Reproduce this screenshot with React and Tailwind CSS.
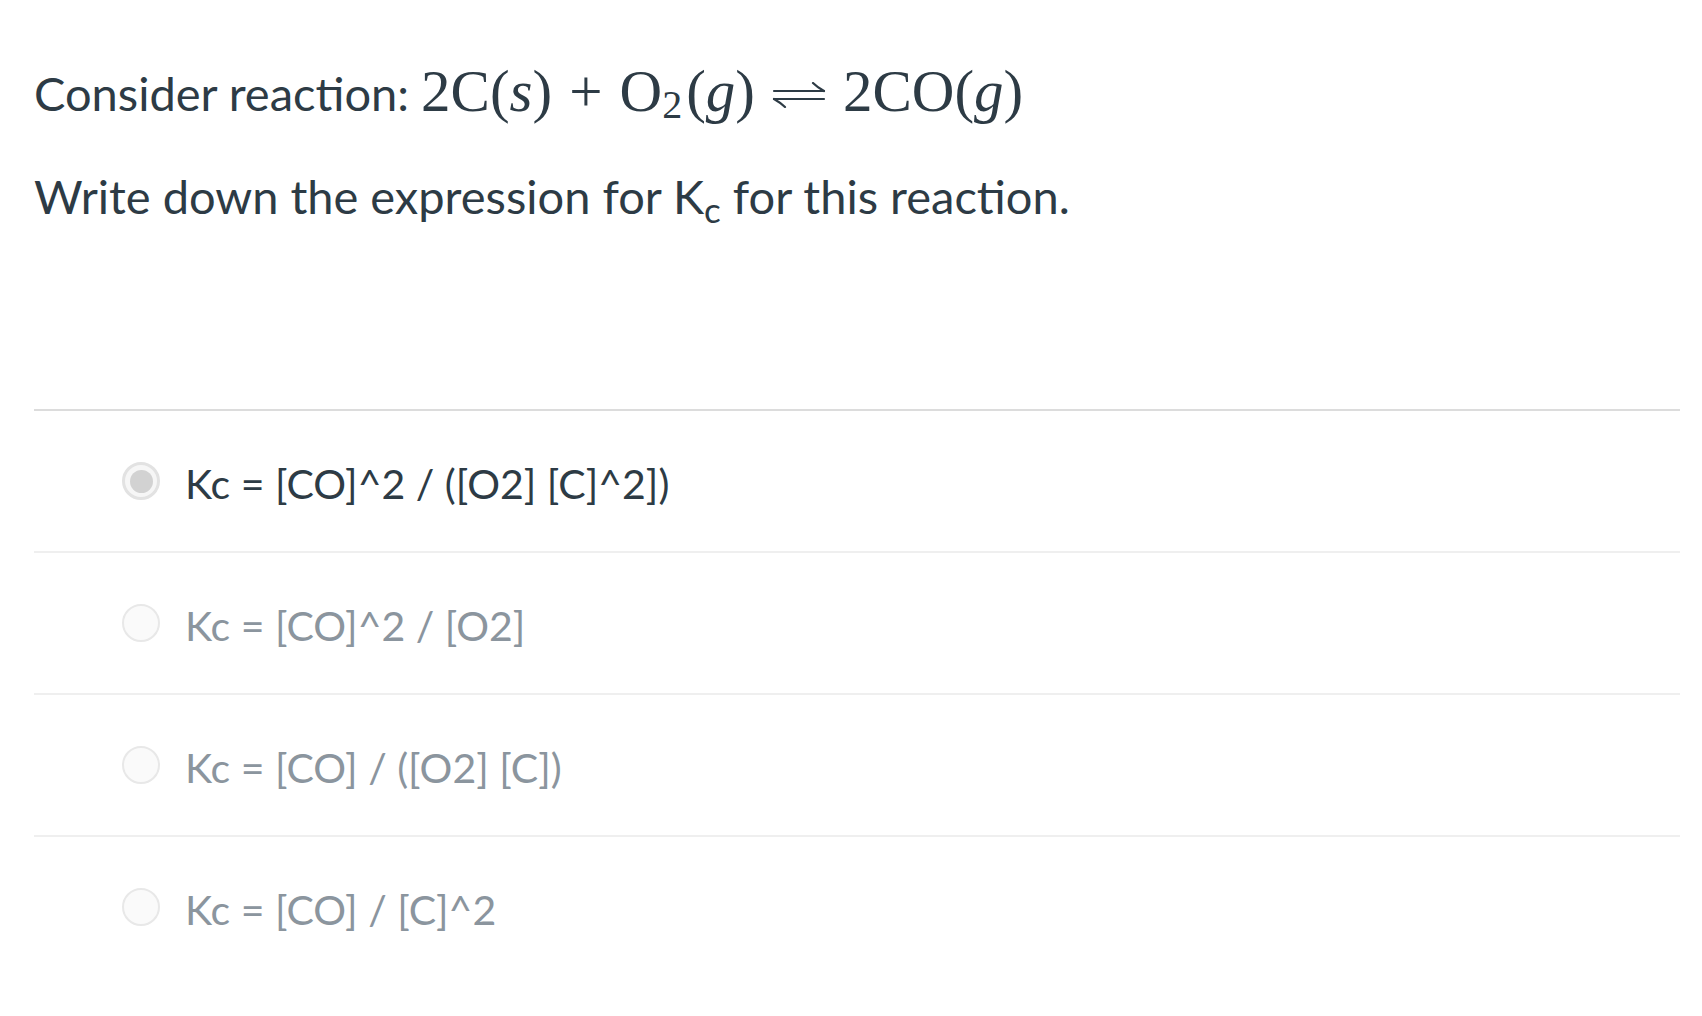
import React from "react";

const Harpoons = () => (
  <svg width="54" height="26" viewBox="0 0 54 26" className="inline-block mx-[17px]" style={{ verticalAlign: "3px" }}>
    <g stroke="#2d3b45" strokeWidth="2.2" fill="none" strokeLinecap="round">
      <path d="M2 9 H52" />
      <path d="M52 9 Q45 5 41 1" />
      <path d="M2 17 H52" />
      <path d="M2 17 Q9 21 13 25" />
    </g>
  </svg>
);

const options = [
  { text: "Kc = [CO]^2 / ([O2] [C]^2])", selected: true },
  { text: "Kc = [CO]^2 / [O2]", selected: false },
  { text: "Kc = [CO] / ([O2] [C])", selected: false },
  { text: "Kc = [CO] / [C]^2", selected: false },
];

export default function App() {
  return (
    <div className="w-[1702px] h-[1016px] bg-white overflow-hidden" style={{ fontFamily: "Lato, 'Noto Sans', sans-serif" }}>
      <div className="pl-[34px] pr-[22px]">
        <p className="pt-[65px] text-[47px] leading-[56px] text-[#2d3b45] whitespace-nowrap">
          Consider reaction:{" "}
          <span className="text-[59px] leading-[40px]" style={{ fontFamily: "'Liberation Serif', 'DejaVu Serif', serif" }}>
            2C(<i>s</i>)<span className="mx-[17px]">+</span>O<sub className="text-[40px] leading-[20px] relative top-[7px] align-baseline">2</sub><span className="ml-[4px]">(</span><i>g</i>)
            <Harpoons />
            2CO(<i>g</i>)
          </span>
        </p>
        <p className="mt-[47px] text-[47px] leading-[56px] text-[#2d3b45] whitespace-nowrap">
          Write down the expression for K<sub className="text-[35px] leading-[20px] align-baseline relative top-[9px]">c</sub> for this reaction.
        </p>
        <div className="mt-[185px]">
          {options.map((o, i) => (
            <div
              key={i}
              className={`h-[142px] flex items-center pl-[88px] border-t-2 ${i === 0 ? "border-[#dcdcdc]" : "border-[#efefef]"}`}
            >
              {o.selected ? (
                <div className="w-[38px] h-[38px] rounded-full border-[3px] border-[#e2e2e2] bg-[#f6f6f6] flex items-center justify-center">
                  <div className="w-[23px] h-[23px] rounded-full bg-[#d2d2d2]" />
                </div>
              ) : (
                <div className="w-[38px] h-[38px] rounded-full border-2 border-[#e8e8e8] bg-[#fafafa]" />
              )}
              <span className={`ml-[25px] text-[41px] leading-none relative top-[2px] ${o.selected ? "text-[#2d3b45]" : "text-[#8b959e]"}`}>
                {o.text}
              </span>
            </div>
          ))}
        </div>
      </div>
    </div>
  );
}
